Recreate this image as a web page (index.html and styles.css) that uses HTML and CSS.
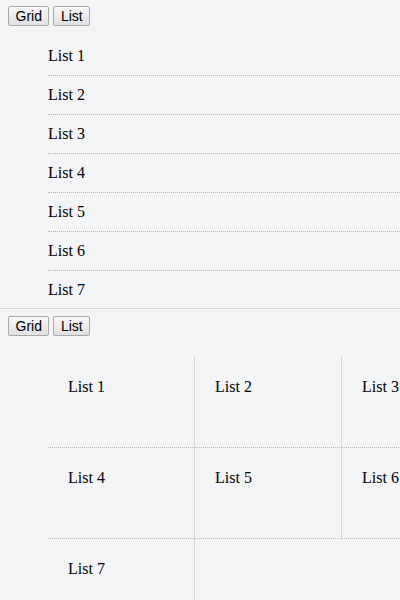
FILE: index.html
```html
<!DOCTYPE html>
<html>
<head>
<meta charset="utf-8">
<link rel="stylesheet" href="styles.css">
</head>
<body>
<div class="section first">
  <div class="toolbar"><button class="btn">Grid</button><button class="btn">List</button></div>
  <ul class="items list">
    <li>List 1</li><li>List 2</li><li>List 3</li><li>List 4</li><li>List 5</li><li>List 6</li><li>List 7</li>
  </ul>
</div>
<div class="section second">
  <div class="toolbar"><button class="btn">Grid</button><button class="btn">List</button></div>
  <ul class="items grid">
    <li>List 1</li><li>List 2</li><li>List 3</li><li>List 4</li><li>List 5</li><li>List 6</li><li>List 7</li>
  </ul>
</div>
</body>
</html>
```

FILE: styles.css
```css
html { overflow: hidden; background: #f4f6f6; }
body {
  margin: 0;
  background: #f3f4f6;
  font-family: "Liberation Serif", "Times New Roman", serif;
  font-size: 16px;
  color: #000;
}
.section { overflow: hidden; }
.section.first { padding-top: 6px; border-bottom: 1px solid #d4d6d8; }
.section.second { padding-top: 7px; }
.toolbar { display: flex; gap: 4px; padding-left: 8px; height: 20px; }
.btn {
  font-family: "Liberation Sans", Arial, sans-serif;
  font-size: 14px;
  line-height: 16px;
  height: 20px;
  padding: 1px 6.5px;
  margin: 0;
  border: 1px solid #a9a9a9;
  border-radius: 2px;
  background: linear-gradient(#f8f8f8, #e0e0e0);
  color: #000;
}
.items { list-style: none; margin: 0; padding: 0 0 0 48px; }
.list { margin-top: 11px; }
.list li {
  padding: 10px 0;
  line-height: 18px;
  border-bottom: 1px dotted #b8b8b8;
}
.list li:last-child { border-bottom: none; padding-bottom: 9px; }
.grid {
  margin-top: 21px;
  display: grid;
  grid-template-columns: repeat(3, 147px);
  width: 441px;
}
.grid li {
  box-sizing: border-box;
  padding: 21px 20px;
  line-height: 18px;
  height: 91px;
  border-right: 1px dotted #b8b8b8;
  border-bottom: 1px dotted #b8b8b8;
}
```
